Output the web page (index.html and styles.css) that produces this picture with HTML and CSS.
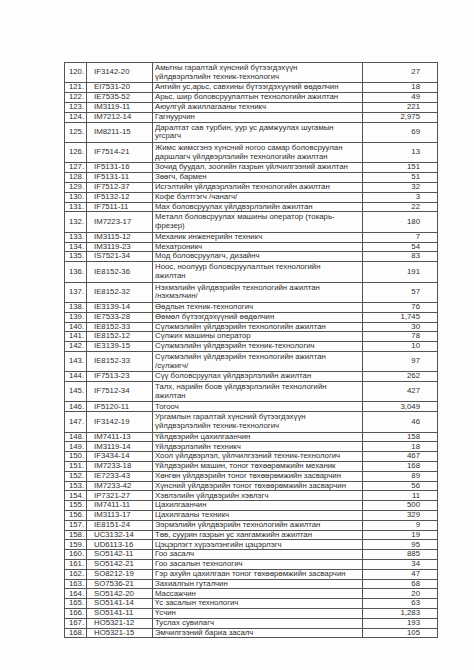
FILE: index.html
```html
<!DOCTYPE html>
<html lang="mn">
<head>
<meta charset="utf-8">
<title>Мэргэжлийн жагсаалт</title>
<link rel="stylesheet" href="styles.css">
</head>
<body>
<div class="page">
<table class="list">
<colgroup><col class="c-no"><col class="c-code"><col class="c-name"><col class="c-val"></colgroup>
<tbody>
<tr class="dbl"><td class="no">120.</td><td class="code">IF3142-20</td><td class="name">Амьтны гаралтай хүнсний бүтээгдэхүүн<br>үйлдвэрлэлийн техник-технологич</td><td class="val">27</td></tr>
<tr><td class="no">121.</td><td class="code">EI7531-20</td><td class="name">Ангийн ус,арьс, савхины бүтээгдэхүүний өөдөлчин</td><td class="val">18</td></tr>
<tr><td class="no">122.</td><td class="code">IE7535-52</td><td class="name">Арьс, шир боловсруулалтын технологийн ажилтан</td><td class="val">49</td></tr>
<tr><td class="no">123.</td><td class="code">IM3119-11</td><td class="name">Аюулгүй ажиллагааны техникч</td><td class="val">221</td></tr>
<tr><td class="no">124.</td><td class="code">IM7212-14</td><td class="name">Гагнуурчин</td><td class="val">2,975</td></tr>
<tr class="dbl"><td class="no">125.</td><td class="code">IM8211-15</td><td class="name">Даралтат сав турбин, уур ус дамжуулах шугамын<br>угсрагч</td><td class="val">69</td></tr>
<tr class="dbl"><td class="no">126.</td><td class="code">IF7514-21</td><td class="name">Жимс жимсгэнэ хүнсний ногоо самар боловсруулан<br>даршлагч үйлдвэрлэлийн технологийн ажилтан</td><td class="val">13</td></tr>
<tr><td class="no">127.</td><td class="code">IF5131-16</td><td class="name">Зочид буудал, зоогийн газрын үйлчилгээний ажилтан</td><td class="val">151</td></tr>
<tr><td class="no">128.</td><td class="code">IF5131-11</td><td class="name">Зөөгч, бармен</td><td class="val">51</td></tr>
<tr><td class="no">129.</td><td class="code">IF7512-37</td><td class="name">Исгэлтийн үйлдвэрлэлийн технологийн ажилтан</td><td class="val">32</td></tr>
<tr><td class="no">130.</td><td class="code">IF5132-12</td><td class="name">Кофе бэлтгэгч /чанагч/</td><td class="val">3</td></tr>
<tr><td class="no">131.</td><td class="code">IF7511-11</td><td class="name">Мах боловсруулах үйлдвэрлэлийн ажилтан</td><td class="val">22</td></tr>
<tr class="dbl"><td class="no">132.</td><td class="code">IM7223-17</td><td class="name">Металл боловсруулах машины оператор (токарь-<br>фрезер)</td><td class="val">180</td></tr>
<tr><td class="no">133.</td><td class="code">IM3115-12</td><td class="name">Механик инженерийн техникч</td><td class="val">7</td></tr>
<tr><td class="no">134.</td><td class="code">IM3119-23</td><td class="name">Мехатроникч</td><td class="val">54</td></tr>
<tr><td class="no">135.</td><td class="code">IS7521-34</td><td class="name">Мод боловсруулагч, дизайнч</td><td class="val">83</td></tr>
<tr class="dbl"><td class="no">136.</td><td class="code">IE8152-36</td><td class="name">Ноос, ноолуур боловсруулалтын технологийн<br>ажилтан</td><td class="val">191</td></tr>
<tr class="dbl"><td class="no">137.</td><td class="code">IE8152-32</td><td class="name">Нэхмэлийн үйлдвэрийн технологийн ажилтан<br>/нэхмэлчин/</td><td class="val">57</td></tr>
<tr><td class="no">138.</td><td class="code">IE3139-14</td><td class="name">Өөдлын техник-технологич</td><td class="val">76</td></tr>
<tr><td class="no">139.</td><td class="code">IE7533-28</td><td class="name">Өөмөл бүтээгдэхүүний өөдөлчин</td><td class="val">1,745</td></tr>
<tr><td class="no">140.</td><td class="code">IE8152-33</td><td class="name">Сүлжмэлийн үйлдвэрийн технологийн ажилтан</td><td class="val">30</td></tr>
<tr><td class="no">141.</td><td class="code">IE8152-12</td><td class="name">Сүлжих машины оператор</td><td class="val">78</td></tr>
<tr><td class="no">142.</td><td class="code">IE3139-15</td><td class="name">Сүлжмэлийн үйлдвэрийн техник-технологич</td><td class="val">10</td></tr>
<tr class="dbl"><td class="no">143.</td><td class="code">IE8152-33</td><td class="name">Сүлжмэлийн үйлдвэрийн технологийн ажилтан<br>/сүлжигч/</td><td class="val">97</td></tr>
<tr><td class="no">144.</td><td class="code">IF7513-23</td><td class="name">Сүү боловсруулах үйлдвэрлэлийн ажилтан</td><td class="val">262</td></tr>
<tr class="dbl"><td class="no">145.</td><td class="code">IF7512-34</td><td class="name">Талх, нарийн боов үйлдвэрлэлийн технологийн<br>ажилтан</td><td class="val">427</td></tr>
<tr><td class="no">146.</td><td class="code">IF5120-11</td><td class="name">Тогооч</td><td class="val">3,049</td></tr>
<tr class="dbl"><td class="no">147.</td><td class="code">IF3142-19</td><td class="name">Ургамлын гаралтай хүнсний бүтээгдэхүүн<br>үйлдвэрлэлийн техник-технологич</td><td class="val">46</td></tr>
<tr><td class="no">148.</td><td class="code">IM7411-13</td><td class="name">Үйлдвэрийн цахилгаанчин</td><td class="val">158</td></tr>
<tr><td class="no">149.</td><td class="code">IM3119-14</td><td class="name">Үйлдвэрлэлийн техникч</td><td class="val">18</td></tr>
<tr><td class="no">150.</td><td class="code">IF3434-14</td><td class="name">Хоол үйлдвэрлэл, үйлчилгээний техник-технологич</td><td class="val">467</td></tr>
<tr><td class="no">151.</td><td class="code">IM7233-18</td><td class="name">Үйлдвэрийн машин, тоног төхөөрөмжийн механик</td><td class="val">168</td></tr>
<tr><td class="no">152.</td><td class="code">IE7233-43</td><td class="name">Хөнгөн үйлдвэрийн тоног төхөөрөмжийн засварчин</td><td class="val">89</td></tr>
<tr><td class="no">153.</td><td class="code">IM7233-42</td><td class="name">Хүнсний үйлдвэрийн тоног төхөөрөмжийн засварчин</td><td class="val">56</td></tr>
<tr><td class="no">154.</td><td class="code">IP7321-27</td><td class="name">Хэвлэлийн үйлдвэрийн хэвлэгч</td><td class="val">11</td></tr>
<tr><td class="no">155.</td><td class="code">IM7411-11</td><td class="name">Цахилгаанчин</td><td class="val">500</td></tr>
<tr><td class="no">156.</td><td class="code">IM3113-17</td><td class="name">Цахилгааны техникч</td><td class="val">329</td></tr>
<tr><td class="no">157.</td><td class="code">IE8151-24</td><td class="name">Ээрмэлийн үйлдвэрийн технологийн ажилтан</td><td class="val">9</td></tr>
<tr><td class="no">158.</td><td class="code">UC3132-14</td><td class="name">Төв, суурин газрын ус хангамжийн ажилтан</td><td class="val">19</td></tr>
<tr><td class="no">159.</td><td class="code">UD6113-16</td><td class="name">Цэцэрлэгт хүрээлэнгийн цэцэрлэгч</td><td class="val">95</td></tr>
<tr><td class="no">160.</td><td class="code">SO5142-11</td><td class="name">Гоо засалч</td><td class="val">885</td></tr>
<tr><td class="no">161.</td><td class="code">SO5142-21</td><td class="name">Гоо засалын технологич</td><td class="val">34</td></tr>
<tr><td class="no">162.</td><td class="code">SO8212-19</td><td class="name">Гэр ахуйн цахилгаан тоног төхөөрөмжийн засварчин</td><td class="val">47</td></tr>
<tr><td class="no">163.</td><td class="code">SO7536-21</td><td class="name">Захиалгын гуталчин</td><td class="val">68</td></tr>
<tr><td class="no">164.</td><td class="code">SO5142-20</td><td class="name">Массажчин</td><td class="val">20</td></tr>
<tr><td class="no">165.</td><td class="code">SO5141-14</td><td class="name">Үс засалын технологич</td><td class="val">63</td></tr>
<tr><td class="no">166.</td><td class="code">SO5141-11</td><td class="name">Үсчин</td><td class="val">1,283</td></tr>
<tr><td class="no">167.</td><td class="code">HO5321-12</td><td class="name">Туслах сувилагч</td><td class="val">193</td></tr>
<tr><td class="no">168.</td><td class="code">HO5321-15</td><td class="name">Эмчилгээний бариа засалч</td><td class="val">105</td></tr>
</tbody>
</table>
</div>
</body>
</html>
```

FILE: styles.css
```css
html, body {
  margin: 0;
  padding: 0;
  background: #ffffff;
}
.page {
  width: 474px;
  height: 670px;
  padding: 62px 0 0 64px;
  box-sizing: border-box;
  background: #fdfdfd;
}
.list {
  border-collapse: collapse;
  table-layout: fixed;
  width: 373px;
  font-family: "Liberation Sans", Arial, sans-serif;
  font-size: 7.8px;
  color: #2f2f2f;
}
.c-no { width: 22px; }
.c-code { width: 66px; }
.c-name { width: 210px; }
.c-val { width: 75px; }
.list td {
  border: 1px solid #555555;
  padding: 0;
  height: 8.8px;
  line-height: 8.6px;
  white-space: nowrap;
  overflow: hidden;
  vertical-align: middle;
}
.list tr.dbl td {
  height: 19.4px;
}
.no {
  text-align: center;
  padding-left: 2px !important;
}
.code {
  padding-left: 7px !important;
}
.name {
  padding-left: 2px !important;
}
.val {
  text-align: right;
  padding-right: 17px !important;
}
```
